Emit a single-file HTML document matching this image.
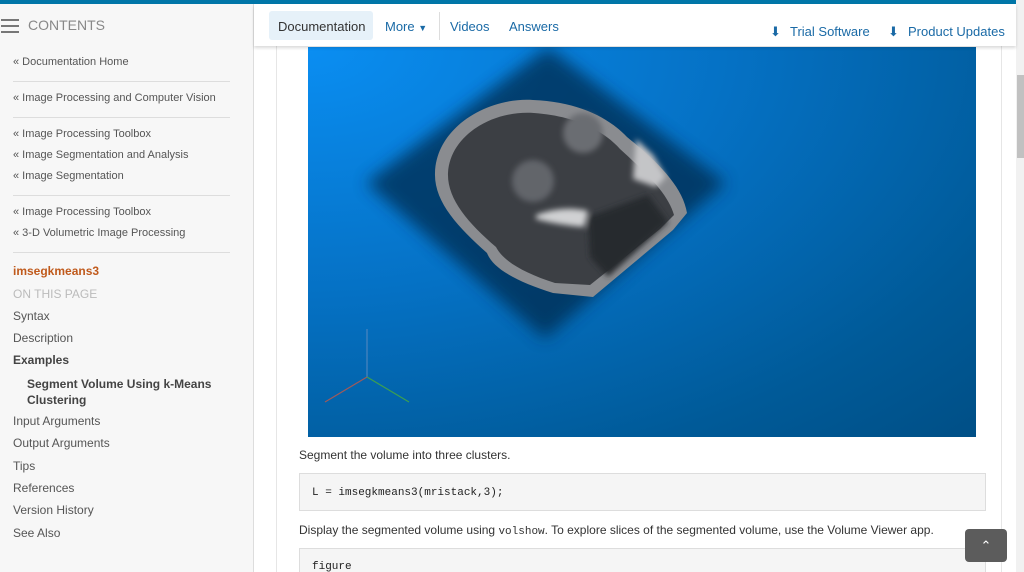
<!DOCTYPE html>
<html><head><meta charset="utf-8"><style>
*{margin:0;padding:0;box-sizing:border-box}
html,body{width:1024px;height:572px;overflow:hidden}
body{background:#fff;font-family:"Liberation Sans",sans-serif;position:relative}
.topbar{position:absolute;left:0;top:0;width:1016px;height:4px;background:#0076a8}
.side{position:absolute;left:0;top:4px;width:254px;height:568px;background:#f7f7f7;border-right:1px solid #ddd}
.side .hd{position:absolute;left:28px;top:13px;font-size:14px;color:#888}
.ham{position:absolute;left:1px;top:15px;width:18px;height:14px}
.ham i{display:block;height:2px;background:#777;margin-bottom:4px}
.s{position:absolute;left:13px;font-size:11px;color:#555;white-space:nowrap}
.hr{position:absolute;left:13px;width:217px;height:1px;background:#ddd}
.t{position:absolute;left:13px;font-size:12px;color:#555;white-space:nowrap}
.main{position:absolute;left:254px;top:4px;width:762px;height:568px}
.nav{position:absolute;left:0;top:0;width:762px;height:42px;background:#fff;box-shadow:0 2px 3px rgba(0,0,0,.15);z-index:3}
.n{position:absolute;top:15px;font-size:13px;color:#1a6aa6}
.doc{position:absolute;left:15px;top:7px;width:104px;height:29px;background:#e6f1f9;border-radius:3px;color:#333;font-size:13px;padding:8px 0 0 9px}
.vl{position:absolute;left:22px;top:42px;width:1px;height:530px;background:#e6e6e6}
.vr{position:absolute;left:747px;top:42px;width:1px;height:530px;background:#e6e6e6}
.img{position:absolute;left:308px;top:47px;width:668px;height:390px;background:radial-gradient(ellipse at 0% 0%,#0a8ef2 0%,#0571c4 45%,#005a98 80%,#004f86 100%);overflow:hidden}
p.tx{position:absolute;left:299px;font-size:12px;color:#333;white-space:nowrap}
.code{position:absolute;left:299px;width:687px;background:#f5f5f5;border:1px solid #ddd;font-family:"Liberation Mono",monospace;font-size:11px;color:#222;padding-left:12px}
.sb{position:absolute;left:1016px;top:0;width:8px;height:572px;background:#f1f1f1}
.th{position:absolute;left:1017px;top:75px;width:7px;height:83px;background:#c1c1c1}
.up{position:absolute;left:965px;top:529px;width:42px;height:33px;background:#5c5c5c;border-radius:4px;color:#fff;text-align:center;font-size:13px;line-height:33px}
</style></head><body>
<div class="topbar"></div>
<div class="side">
<div class="ham"><i></i><i></i><i></i></div>
<div class="hd">CONTENTS</div>
<div class="s" style="top:52px">« Documentation Home</div>
<div class="hr" style="top:77px"></div>
<div class="s" style="top:88px">« Image Processing and Computer Vision</div>
<div class="hr" style="top:113px"></div>
<div class="s" style="top:124px">« Image Processing Toolbox</div>
<div class="s" style="top:145px">« Image Segmentation and Analysis</div>
<div class="s" style="top:166px">« Image Segmentation</div>
<div class="hr" style="top:191px"></div>
<div class="s" style="top:202px">« Image Processing Toolbox</div>
<div class="s" style="top:223px">« 3-D Volumetric Image Processing</div>
<div class="hr" style="top:248px"></div>
<div class="t" style="top:260px;color:#c05a1c;font-weight:bold">imsegkmeans3</div>
<div class="t" style="top:283px;color:#bbb">ON THIS PAGE</div>
<div class="t" style="top:305px">Syntax</div>
<div class="t" style="top:327px">Description</div>
<div class="t" style="top:349px;font-weight:bold;color:#444">Examples</div>
<div class="t" style="top:372px;left:27px;font-weight:bold;color:#444;line-height:16px">Segment Volume Using k-Means<br>Clustering</div>
<div class="t" style="top:410px">Input Arguments</div>
<div class="t" style="top:432px">Output Arguments</div>
<div class="t" style="top:455px">Tips</div>
<div class="t" style="top:477px">References</div>
<div class="t" style="top:499px">Version History</div>
<div class="t" style="top:522px">See Also</div>
</div>
<div class="main">
<div class="nav">
<div class="doc">Documentation</div>
<div class="n" style="left:131px">More <span style="font-size:9px">▼</span></div>
<div style="position:absolute;left:185px;top:8px;width:1px;height:28px;background:#ddd"></div>
<div class="n" style="left:196px">Videos</div>
<div class="n" style="left:255px">Answers</div>
<div class="n" style="left:516px;top:20px;color:#1a6aa6">⬇</div>
<div class="n" style="left:536px;top:20px">Trial Software</div>
<div class="n" style="left:634px;top:20px">⬇</div>
<div class="n" style="left:654px;top:20px">Product Updates</div>
</div>
<div class="vl"></div><div class="vr"></div>
</div>
<div class="img">
<svg width="668" height="390" viewBox="0 0 668 390">
<defs><filter id="b"><feGaussianBlur stdDeviation="8"/></filter>
<filter id="b2"><feGaussianBlur stdDeviation="3"/></filter></defs>
<polygon points="240,0 418,136 237,292 58,136" fill="#032a4e" opacity="0.75" filter="url(#b)"/>
<path d="M127,126 C128,80 180,50 225,53 C270,55 300,70 319,90 C350,115 375,140 379,166 L365,183 L285,250 L245,246 C210,235 185,222 179,206 C150,180 126,155 127,126 Z" fill="#8a8c90"/>
<path d="M140,126 C142,88 185,63 226,66 C268,69 296,84 312,102 C336,124 360,146 366,168 L352,182 L282,238 L247,236 C216,226 195,214 188,200 C160,176 139,152 140,126 Z" fill="#3c3f44"/>
<g filter="url(#b2)">
<circle cx="275" cy="86" r="20" fill="#6a6d72"/><circle cx="225" cy="134" r="21" fill="#62656a"/>
<path d="M328,92 L345,108 L358,130 L348,140 L325,132 Z" fill="#c4c5c7"/>
<path d="M228,168 Q255,158 280,164 L276,180 Q250,178 228,172 Z" fill="#d0d1d3"/>
<path d="M280,170 L340,148 L360,175 L300,230 L282,210 Z" fill="#26292e"/>
</g>
<line x1="59" y1="282" x2="59" y2="330" stroke="#5a8ac0" stroke-width="1"/>
<line x1="59" y1="330" x2="17" y2="355" stroke="#a05a5a" stroke-width="1.2"/>
<line x1="59" y1="330" x2="101" y2="355" stroke="#3ca050" stroke-width="1.2"/>
</svg>
</div>
<p class="tx" style="top:448px">Segment the volume into three clusters.</p>
<div class="code" style="top:473px;height:38px;line-height:38px">L = imsegkmeans3(mristack,3);</div>
<p class="tx" style="top:523px">Display the segmented volume using <span style="font-family:'Liberation Mono',monospace;font-size:11px">volshow</span>. To explore slices of the segmented volume, use the Volume Viewer app.</p>
<div class="code" style="top:548px;height:24px;padding-top:12px;border-bottom:none">figure</div>
<div class="sb"></div><div class="th"></div>
<div class="up">&#8963;</div>
</body></html>
